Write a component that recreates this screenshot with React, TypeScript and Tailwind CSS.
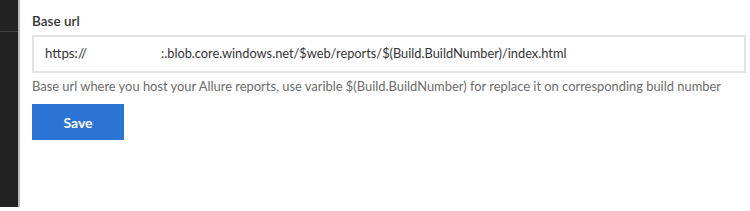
import React from "react";

export default function App() {
  return (
    <div className="w-[750px] h-[211px] bg-white flex items-start overflow-hidden" style={{ fontFamily: '"Segoe UI", Lato, "Noto Sans", sans-serif' }}>
      <div className="w-[20px] h-[207px] bg-[#222222] border-r-2 border-[#b8b8b8] shrink-0 flex flex-col">
        <div className="h-[32px] border-b border-[#444444]" />
      </div>
      <div className="flex-1 pl-[12px] pr-[4px] pt-[12px] flex flex-col">
        <div className="text-[13.5px] font-semibold text-[#333333] leading-[18px]">Base url</div>
        <div className="mt-[5px] h-[38px] border-2 border-[#e3e3e3] flex items-center pl-[11px] text-[13.3px] text-[#333333] whitespace-nowrap">
          <span>https://</span>
          <span className="ml-[74px] text-[12.8px]">:.blob.core.windows.net/$web/reports/$(Build.BuildNumber)/index.html</span>
        </div>
        <div className="mt-[4px] text-[12.9px] text-[#6b6b6b] leading-[18px] whitespace-nowrap">
          Base url where you host your Allure reports, use varible $(Build.BuildNumber) for replace it on corresponding build number
        </div>
        <button className="mt-[9px] w-[92px] h-[36px] bg-[#2b74d4] text-white text-[14px] font-bold">Save</button>
      </div>
    </div>
  );
}
